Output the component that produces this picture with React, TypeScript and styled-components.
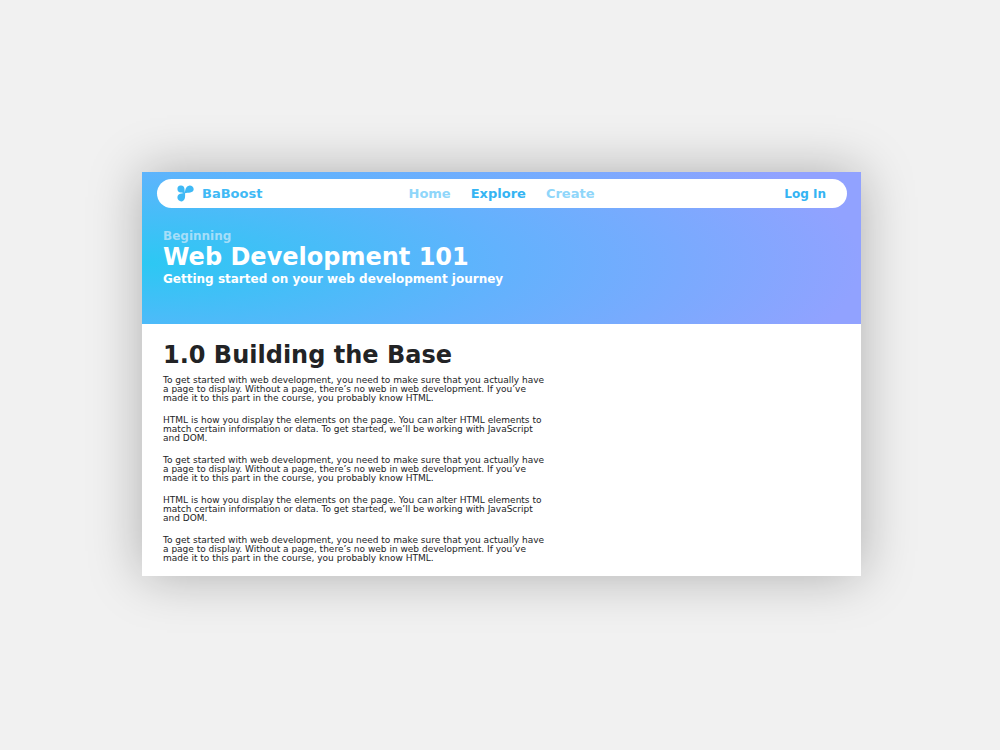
import React from "react";
import styled, { createGlobalStyle } from "styled-components";

const GlobalStyle = createGlobalStyle`
  * { box-sizing: border-box; }
  body {
    margin: 0;
    background: #f1f1f1;
    font-family: "DejaVu Sans", Verdana, sans-serif;
    color: #222325;
  }
  h1, h2, p { margin: 0; }
`;

const Page = styled.div`
  min-height: 100vh;
  padding: 172px 139px 174px 142px;
`;

const Card = styled.div`
  background: #fff;
  box-shadow: 0 0 50px rgba(0, 0, 0, 0.28);
`;

const Hero = styled.header`
  padding: 7px 14px 37px 15px;
  background: radial-gradient(ellipse 100% 130% at 0% 60%, #2cc8f3 0%, #62b2fd 50%, #91a2ff 100%);
`;

const NavBar = styled.nav`
  display: grid;
  grid-template-columns: 1fr auto 1fr;
  align-items: center;
  height: 29px;
  padding: 0 21px 0 20px;
  border-radius: 15px;
  background: #fff;
`;

const Brand = styled.a`
  display: flex;
  align-items: center;
  gap: 8px;
  color: #3fb9f5;
  font-size: 13px;
  font-weight: 700;
  text-decoration: none;
`;

const NavLinks = styled.div`
  display: flex;
  gap: 20px;
`;

const NavLink = styled.a<{ $active?: boolean }>`
  color: ${(p) => (p.$active ? "#34b4f3" : "#8fd6fa")};
  font-size: 13px;
  font-weight: 700;
  text-decoration: none;
`;

const LogIn = styled.button`
  justify-self: end;
  padding: 0;
  border: 0;
  background: none;
  color: #34b4f3;
  font: inherit;
  font-size: 12px;
  font-weight: 700;
  cursor: pointer;
`;

const HeroText = styled.div`
  padding: 21px 6px 0;
  color: #fff;
  font-weight: 700;
`;

const Level = styled.p`
  color: #a5def9;
  font-size: 12px;
  line-height: 15px;
`;

const Title = styled.h1`
  font-size: 24px;
  line-height: 27px;
`;

const Subtitle = styled.p`
  font-size: 12px;
  line-height: 16px;
`;

const Article = styled.main`
  padding: 17px 21px 13px;
`;

const Heading = styled.h2`
  font-size: 24px;
  line-height: 28px;
`;

const Body = styled.div`
  display: grid;
  gap: 13px;
  padding-top: 7px;
`;

const Paragraph = styled.p`
  font-size: 9px;
  line-height: 9px;
  white-space: pre-line;
`;

const display = `To get started with web development, you need to make sure that you actually have
a page to display. Without a page, there’s no web in web development. If you’ve
made it to this part in the course, you probably know HTML.`;

const elements = `HTML is how you display the elements on the page. You can alter HTML elements to
match certain information or data. To get started, we’ll be working with JavaScript
and DOM.`;

const paragraphs = [display, elements, display, elements, display];

function Logo() {
  return (
    <svg width="17" height="17" viewBox="0 0 17 17" fill="#3fb9f5" aria-hidden="true">
      <path d="M8 8.200C5.600 7.600 5.200 7.600 3.800 7.400A3.500 3.500 0 1 1 7.400 3.400C7.700 5.400 7.500 6 8 8.200Z" />
      <path d="M7.700 8.200C8.200 5.200 8.500 1 12.600.4A3.900 3.900 0 0 1 16.700 4.200C16.500 8 11 7.500 7.700 8.200Z" />
      <path d="M8.100 7.800C8 10.500 9 15.700 4.600 16.400A3.900 3.900 0 0 1 .4 12.500C.5 8.300 5 8.400 8.100 7.800Z" />
    </svg>
  );
}

export default function App() {
  return (
    <>
      <GlobalStyle />
      <Page>
        <Card>
          <Hero>
            <NavBar>
              <Brand href="#home">
                <Logo />
                BaBoost
              </Brand>
              <NavLinks>
                <NavLink href="#home">Home</NavLink>
                <NavLink href="#explore" $active aria-current="page">Explore</NavLink>
                <NavLink href="#create">Create</NavLink>
              </NavLinks>
              <LogIn type="button">Log In</LogIn>
            </NavBar>
            <HeroText>
              <Level>Beginning</Level>
              <Title>Web Development 101</Title>
              <Subtitle>Getting started on your web development journey</Subtitle>
            </HeroText>
          </Hero>
          <Article>
            <Heading>1.0 Building the Base</Heading>
            <Body>
              {paragraphs.map((text, i) => (
                <Paragraph key={i}>{text}</Paragraph>
              ))}
            </Body>
          </Article>
        </Card>
      </Page>
    </>
  );
}
